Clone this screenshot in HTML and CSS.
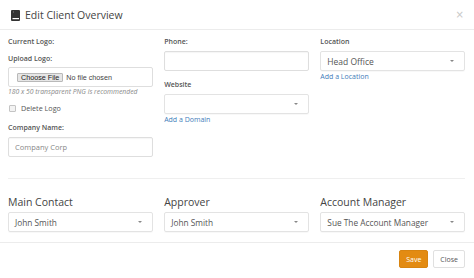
FILE: index.html
```html
<!DOCTYPE html>
<html lang="en">
<head>
    <meta charset="UTF-8">
    <title>Edit Client Overview</title>
    <link rel="stylesheet" href="styles.css">
</head>
<body>

<div class="modal">
    <div class="modal-header">
        <svg class="book-icon" width="9" height="11" viewBox="0 0 9 11">
            <rect x="0" y="0" width="9" height="11" rx="1" fill="#333"/>
            <rect x="1.5" y="8" width="6.5" height="1.2" fill="#fff"/>
            <rect x="2" y="1.5" width="1" height="1" fill="#888"/>
        </svg>
        <h4 class="modal-title">Edit Client Overview</h4>
        <button class="close" type="button">&times;</button>
    </div>

    <div class="modal-body">
        <div class="form-row">
            <!-- Logo + company -->
            <div class="col">
                <label class="field-label">Current Logo:</label>
                <label class="field-label label-upload">Upload Logo:</label>
                <label class="file-input">
                    <span class="file-btn">Choose File</span>
                    <span class="file-name">No file chosen</span>
                </label>
                <p class="help-text">180 x 50 transparent PNG is recommended</p>
                <label class="check-row">
                    <input type="checkbox" class="check">
                    <span>Delete Logo</span>
                </label>
                <label class="field-label label-company">Company Name:</label>
                <input type="text" class="text-input input-short" placeholder="Company Corp">
            </div>

            <!-- Phone + website -->
            <div class="col">
                <label class="field-label">Phone:</label>
                <input type="text" class="text-input">
                <label class="field-label label-website">Website</label>
                <div class="select"><span class="select-text"></span><span class="caret"></span></div>
                <a href="#" class="add-link">Add a Domain</a>
            </div>

            <!-- Location -->
            <div class="col">
                <label class="field-label">Location</label>
                <div class="select select-big"><span class="select-text">Head Office</span><span class="caret"></span></div>
                <a href="#" class="add-link">Add a Location</a>
            </div>
        </div>

        <hr class="divider">

        <div class="form-row">
            <div class="col">
                <label class="big-label">Main Contact</label>
                <div class="select"><span class="select-text">John Smith</span><span class="caret"></span></div>
            </div>
            <div class="col">
                <label class="big-label">Approver</label>
                <div class="select"><span class="select-text">John Smith</span><span class="caret"></span></div>
            </div>
            <div class="col">
                <label class="big-label">Account Manager</label>
                <div class="select"><span class="select-text">Sue The Account Manager</span><span class="caret"></span></div>
            </div>
        </div>
    </div>

    <div class="modal-footer">
        <button class="btn btn-save" type="button">Save</button>
        <button class="btn btn-close" type="button">Close</button>
    </div>
</div>

</body>
</html>
```

FILE: styles.css
```css
/* --- Base --- */
body {
    margin: 0;
    background-color: #ffffff;
    font-family: "Open Sans", "DejaVu Sans", sans-serif;
    color: #555;
}

.modal {
    width: 474px;
    height: 278px;
    background-color: #fff;
}

/* --- Header --- */
.modal-header {
    height: 29px;
    border-bottom: 1px solid #ececec;
    display: flex;
    align-items: center;
    padding: 0 10px 0 11px;
}

.book-icon {
    margin-right: 5px;
    margin-top: 1px;
}

.modal-title {
    margin: 0;
    font-size: 10.5px;
    font-weight: 400;
    color: #444;
    flex: 1;
    line-height: 14px;
}

.close {
    border: none;
    background: none;
    padding: 0;
    font-size: 10px;
    line-height: 10px;
    color: #c8c8c8;
    font-family: "DejaVu Sans", sans-serif;
    cursor: pointer;
}

/* --- Body --- */
.modal-body {
    padding: 7px 9px 10px 8px;
}

.form-row {
    display: grid;
    grid-template-columns: repeat(3, 1fr);
    column-gap: 11.5px;
    align-items: start;
}

.col {
    display: flex;
    flex-direction: column;
    align-items: stretch;
}

.field-label {
    font-size: 7px;
    font-weight: 600;
    line-height: 10px;
    color: #555;
    margin-bottom: 4px;
}

.label-upload {
    margin-top: 3px;
    margin-bottom: 3px;
}

.label-website {
    margin-top: 9px;
}

.label-company {
    margin-top: 10px;
}

.text-input {
    height: 20px;
    box-sizing: border-box;
    border: 1px solid #dedede;
    border-radius: 2px;
    box-shadow: inset 0 1px 1px rgba(0, 0, 0, 0.04);
    padding: 0 6px;
    font-family: inherit;
    font-size: 7.5px;
    color: #666;
    outline: none;
}

.text-input::placeholder {
    color: #888;
}

/* --- File input look --- */
.file-input {
    height: 20px;
    box-sizing: border-box;
    border: 1px solid #dedede;
    border-radius: 2px;
    display: flex;
    align-items: center;
    padding-left: 8px;
    font-family: "Liberation Sans", Arial, sans-serif;
    font-size: 7.2px;
}

.file-btn {
    background-color: #e6e6e6;
    border: 1px solid #b9b9b9;
    border-radius: 1px;
    color: #222;
    line-height: 7px;
    padding: 0 3px;
    margin-right: 3px;
}

.file-name {
    color: #444;
}

.help-text {
    margin: 0;
    font-size: 6.8px;
    font-style: italic;
    line-height: 10px;
    color: #888;
}

.check-row {
    display: flex;
    align-items: center;
    margin-top: 6px;
    font-size: 7.2px;
    line-height: 10px;
    color: #555;
}

.check {
    appearance: none;
    width: 7px;
    height: 7px;
    margin: 0 5px 0 1px;
    border: 1px solid #c4c4c4;
    border-radius: 1px;
    background-color: #f3f3f3;
}

/* --- Select look --- */
.select {
    height: 20px;
    box-sizing: border-box;
    border: 1px solid #e3e3e3;
    border-radius: 2px;
    box-shadow: 0 1px 1px rgba(0, 0, 0, 0.03);
    display: flex;
    align-items: center;
    justify-content: space-between;
    padding: 0 10px 0 6px;
}

.select-text {
    font-size: 8.3px;
    color: #555;
}

.select-big .select-text {
    font-size: 8.5px;
}

.caret {
    width: 0;
    height: 0;
    border-left: 2.5px solid transparent;
    border-right: 2.5px solid transparent;
    border-top: 2.5px solid #888;
}

.add-link {
    font-size: 7px;
    line-height: 11px;
    color: #3f7dba;
    text-decoration: none;
}

/* --- Divider --- */
.divider {
    border: none;
    border-top: 1px solid #efefef;
    margin: 21px 0 16px;
}

.big-label {
    font-size: 10.5px;
    line-height: 14px;
    color: #444;
    margin-bottom: 3px;
}

/* --- Footer --- */
.modal-footer {
    border-top: 1px solid #ececec;
    display: flex;
    justify-content: flex-end;
    gap: 5px;
    padding: 7px 9px 0 0;
}

.btn {
    height: 18px;
    box-sizing: border-box;
    border-radius: 2px;
    font-family: inherit;
    font-size: 7px;
    padding: 0 6px;
    cursor: pointer;
}

.btn-save {
    background-color: #e38b12;
    border: 1px solid #d88410;
    color: #fff;
}

.btn-close {
    background-color: #fff;
    border: 1px solid #e0e0e0;
    color: #555;
}
```
